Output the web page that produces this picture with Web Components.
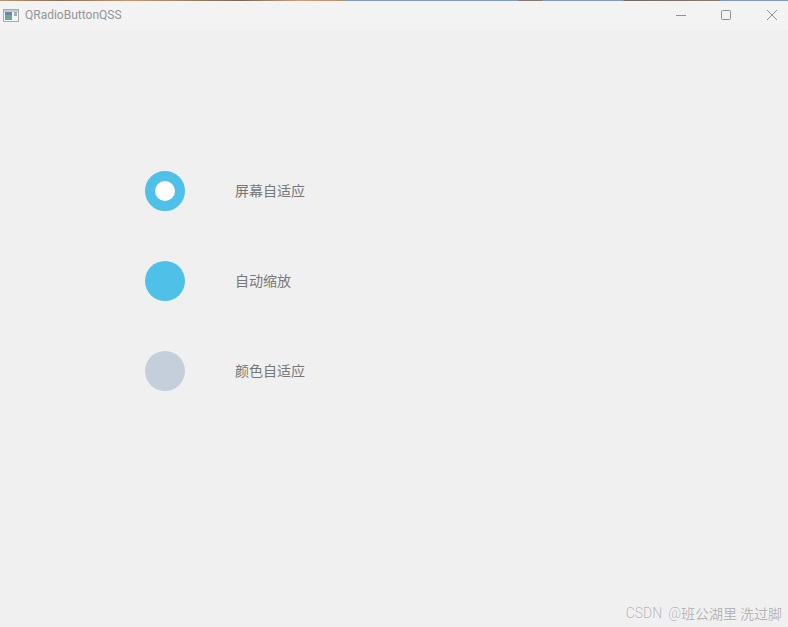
<!DOCTYPE html>
<html>
<head>
<meta charset="utf-8">
<style>
html, body { margin: 0; height: 100%; }
body { background: #f0f0f0; overflow: hidden; font-family: "Noto Sans CJK SC", "Liberation Sans", sans-serif; }
</style>
</head>
<body>
<qt-window title="QRadioButtonQSS">
	<qt-radio state="checked">屏幕自适应</qt-radio>
	<qt-radio state="filled">自动缩放</qt-radio>
	<qt-radio>颜色自适应</qt-radio>
</qt-window>
<script>
class QtTitlebar extends HTMLElement {
	constructor() {
		super();
		this.attachShadow({ mode: 'open' });
		this.shadowRoot.innerHTML = `
      <style>
        :host {
          display: flex;
          flex: none;
          align-items: center;
          height: 29px;
          background: #f3f3f3;
          color: #959595;
          font: 12px "Roboto", "Liberation Sans", sans-serif;
        }
        .icon { display: block; margin-left: 3px; }
        .title { margin-left: 6px; padding-bottom: 1px; }
        .buttons { display: flex; margin-left: auto; }
        .buttons svg { display: block; width: 46px; height: 29px; }
      </style>
      <svg class="icon" width="16" height="13" viewBox="0 0 16 13">
        <rect x=".5" y=".5" width="15" height="12" fill="#f2f4f4" stroke="#a3abb0"/>
        <rect x="1" y="1" width="14" height="2" fill="#c3c9cc"/>
        <rect x="2" y="3" width="7" height="8" fill="#6fa39c"/>
        <rect x="2" y="3" width="7" height="3" fill="#6a86a0"/>
        <rect x="11" y="3" width="3" height="4" fill="#9bb0bd"/>
      </svg>
      <span class="title"><slot></slot></span>
      <div class="buttons">
        <svg viewBox="0 0 46 29"><path d="M26 14.5h10" stroke="#8f8f8f" fill="none"/></svg>
        <svg viewBox="0 0 46 29"><rect x="25.5" y="9.5" width="9" height="9" rx="1" stroke="#8f8f8f" fill="none"/></svg>
        <svg viewBox="0 0 46 29"><path d="M25 9l10 10M35 9l-10 10" stroke="#8f8f8f" fill="none"/></svg>
      </div>
    `;
	}
}

class QtWindow extends HTMLElement {
	constructor() {
		super();
		this.attachShadow({ mode: 'open' });
		this.shadowRoot.innerHTML = `
      <style>
        :host {
          display: flex;
          flex-direction: column;
          height: 100vh;
          position: relative;
        }
        .wallpaper {
          flex: none;
          height: 1px;
          background: linear-gradient(90deg,
            #b8966e 0, #8c6f58 60px, #c09a72 130px, #7d6656 240px, #c7a27c 300px, #b58f6c 345px,
            #7f9cc0 346px, #7f9cc0 518px, #85786f 519px, #85786f 542px,
            #7f9cc0 543px, #7f9cc0 623px, #6f6864 624px, #8a7d74 720px,
            #7f9cc0 721px, #7f9cc0 788px);
        }
        .content {
          flex: 1;
          display: flex;
          flex-direction: column;
          gap: 50px;
          padding: 141px 0 0 145px;
        }
        .mark {
          position: absolute;
          right: 6px;
          bottom: 5px;
          display: flex;
          gap: 3px;
          color: rgba(125, 125, 125, .58);
          text-shadow: 0 0 1px #fff;
          font: 14px/18px "Noto Sans CJK SC", sans-serif;
        }
        .latin { font-family: "Roboto", "Noto Sans CJK SC", sans-serif; font-weight: 300; margin-right: 3px; }
        .at { margin-right: -3px; }
      </style>
      <div class="wallpaper"></div>
      <qt-titlebar></qt-titlebar>
      <div class="content"><slot></slot></div>
      <div class="mark"><span class="latin">CSDN</span><span class="latin at">@</span><span>班公湖里</span><span>洗过脚</span></div>
    `;
	}
	connectedCallback() {
		this.shadowRoot.querySelector('qt-titlebar').textContent = this.getAttribute('title');
	}
}

class QtRadio extends HTMLElement {
	constructor() {
		super();
		this.attachShadow({ mode: 'open' });
		this.shadowRoot.innerHTML = `
      <style>
        :host {
          display: flex;
          align-items: center;
          gap: 50px;
          height: 40px;
          color: #777;
          font: 14px "Noto Sans CJK SC", sans-serif;
        }
        .dot {
          box-sizing: border-box;
          width: 40px;
          height: 40px;
          border-radius: 50%;
          background: #c5cfdc;
        }
        .label { padding-bottom: 2px; }
        :host([state="filled"]) .dot { background: #4fc1e9; }
        :host([state="checked"]) .dot {
          background: #fff;
          border: 10px solid #4fc1e9;
        }
      </style>
      <span class="dot"></span>
      <span class="label"><slot></slot></span>
    `;
	}
}

customElements.define('qt-titlebar', QtTitlebar);
customElements.define('qt-window', QtWindow);
customElements.define('qt-radio', QtRadio);
</script>
</body>
</html>
